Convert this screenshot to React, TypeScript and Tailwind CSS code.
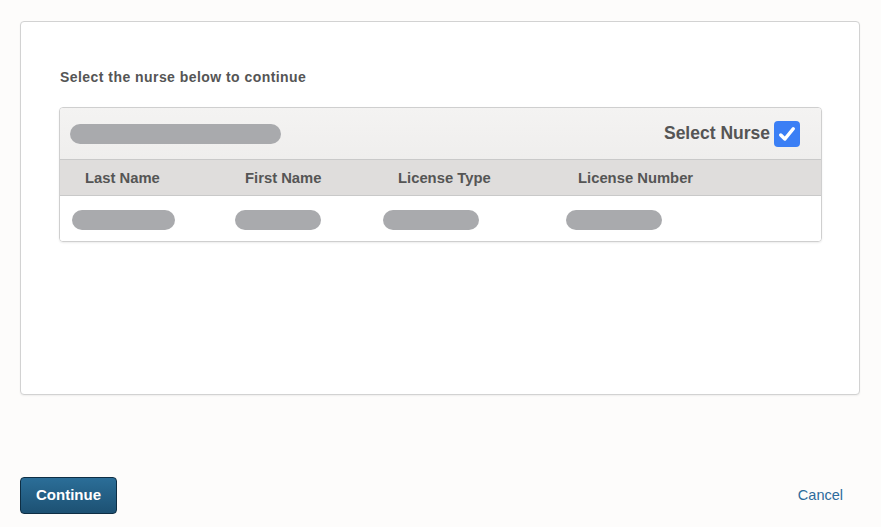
import React from "react";

const columns = [
  { label: "Last Name", width: "w-[160px]" },
  { label: "First Name", width: "w-[153px]" },
  { label: "License Type", width: "w-[180px]" },
  { label: "License Number", width: "" },
];

const rowPills = [
  { cell: "w-[163px]", pill: "w-[103px]" },
  { cell: "w-[148px]", pill: "w-[86px]" },
  { cell: "w-[183px]", pill: "w-[96px]" },
  { cell: "", pill: "w-[96px]" },
];

function Pill({ className }: { className: string }) {
  return <span className={`block h-[20px] rounded-full bg-[#a9aaad] ${className}`} />;
}

export default function App() {
  return (
    <div
      className="flex min-h-[527px] flex-col bg-[#fdfcfb] pb-[13px] pl-5 pr-[21px] pt-[21px] text-[#555555]"
      style={{ fontFamily: '"Liberation Sans", Arial, sans-serif' }}
    >
      {/* Card */}
      <section className="h-[374px] rounded-[4px] border border-[#d2d2d2] bg-white pl-[38px] pr-[37px] pt-[47px] shadow-[0_1px_2px_rgba(0,0,0,0.06)]">
        <p className="pl-px text-[14px] font-bold leading-[16px] tracking-[0.45px]">
          Select the nurse below to continue
        </p>

        <div className="mt-[22px] overflow-hidden rounded-[4px] border border-[#cfcfcf] shadow-[0_1px_2px_rgba(0,0,0,0.08)]">
          {/* Group header */}
          <div className="flex h-[51px] items-center justify-between bg-gradient-to-b from-[#f4f3f2] to-[#efeeed] pl-[10px] pr-[21px]">
            <Pill className="w-[211px]" />
            <label className="flex items-center gap-[4px] text-[17.5px] font-bold">
              Select Nurse
              <span className="flex h-[26px] w-[26px] items-center justify-center rounded-[4px] bg-[#3b7ff5]">
                <svg viewBox="0 0 16 16" className="h-[20px] w-[20px]" fill="none" stroke="white" strokeWidth="2.8" strokeLinecap="round" strokeLinejoin="round">
                  <path d="M3 8.8 6.3 12 13 3.8" />
                </svg>
              </span>
            </label>
          </div>

          {/* Column headers */}
          <div className="flex h-[37px] items-center border-y border-[#c9c9c9] bg-[#dfdddc] pl-[25px] pt-[2px] text-[14.8px] font-bold">
            {columns.map((c) => (
              <span key={c.label} className={c.width}>
                {c.label}
              </span>
            ))}
          </div>

          {/* Data row */}
          <div className="flex h-[45px] items-center bg-white pl-[12px] pt-[2px]">
            {rowPills.map((p, i) => (
              <div key={i} className={p.cell}>
                <Pill className={p.pill} />
              </div>
            ))}
          </div>
        </div>
      </section>

      {/* Actions */}
      <div className="mt-auto flex items-center justify-between pr-[17px]">
        <button className="h-[37px] w-[97px] rounded-[4px] border border-[#0e2e44] bg-gradient-to-b from-[#2b6e98] to-[#1d5173] text-[15px] font-bold text-white">
          Continue
        </button>
        <a href="#" className="text-[14.5px] text-[#2d6b9c]">
          Cancel
        </a>
      </div>
    </div>
  );
}
